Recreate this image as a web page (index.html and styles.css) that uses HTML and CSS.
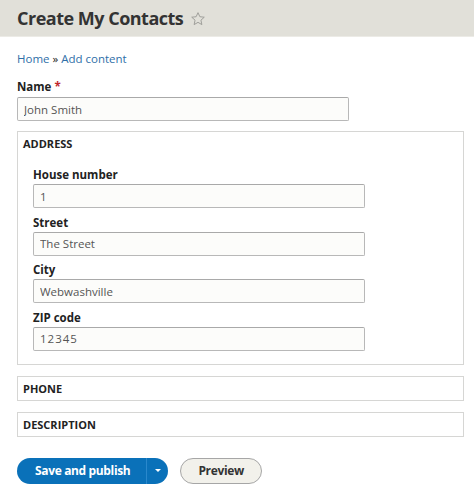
FILE: index.html
```html
<!DOCTYPE html>
<html lang="en">
<head>
    <meta charset="UTF-8">
    <meta name="viewport" content="width=device-width, initial-scale=1.0">
    <title>Create My Contacts</title>
    <link rel="stylesheet" href="styles.css">
</head>
<body>
    <div class="page-header">
        <h1 class="page-title">Create My Contacts</h1>
        <svg class="star" viewBox="0 0 24 24" width="16" height="16"><path d="M12 2.5l2.8 6.1 6.6.7-5 4.5 1.4 6.6L12 17l-5.8 3.4 1.4-6.6-5-4.5 6.6-.7z" fill="none" stroke="#9a9a96" stroke-width="1.4" stroke-linejoin="round"/></svg>
    </div>
    <div class="content">
        <div class="breadcrumb"><a href="#">Home</a> &raquo; <a href="#">Add content</a></div>

        <div class="form-item">
            <label>Name <span class="required">*</span></label>
            <input type="text" class="form-text wide" value="John Smith">
        </div>

        <div class="fieldset">
            <div class="legend">Address</div>
            <div class="fieldset-body">
                <div class="form-item">
                    <label>House number</label>
                    <input type="text" class="form-text" value="1">
                </div>
                <div class="form-item">
                    <label>Street</label>
                    <input type="text" class="form-text" value="The Street">
                </div>
                <div class="form-item">
                    <label>City</label>
                    <input type="text" class="form-text" value="Webwashville">
                </div>
                <div class="form-item">
                    <label>ZIP code</label>
                    <input type="text" class="form-text zip" value="12345">
                </div>
            </div>
        </div>

        <div class="fieldset collapsed"><div class="legend">Phone</div></div>
        <div class="fieldset collapsed"><div class="legend">Description</div></div>

        <div class="actions">
            <div class="split-button">
                <button class="button-primary">Save and publish</button>
                <button class="button-toggle"><span class="caret"></span></button>
            </div>
            <button class="button">Preview</button>
        </div>
    </div>
</body>
</html>
```

FILE: styles.css
```css
:root {
    --link-color: #2f6fa8;
    --text-color: #222;
    --border-color: #d6d6d4;
    --input-border: #b8b8b8;
    --primary-color: #0a71b9;
}
body, html { margin: 0; padding: 0; font-family: 'Open Sans', 'DejaVu Sans', sans-serif; background: #fff; color: var(--text-color); }
.page-header { background: #e1e0d9; height: 37px; border-bottom: 1px solid #ecebe6; box-sizing: border-box; padding: 0 17px; display: flex; align-items: center; }
.page-title { margin: 0; font-size: 18px; font-weight: bold; color: #333; letter-spacing: -0.5px; }
.star { margin-left: 7px; margin-top: 1px; }
.content { padding: 0 10px 0 17px; }
.breadcrumb { font-size: 11.5px; margin-top: 15px; line-height: 14px; }
.breadcrumb a { color: var(--link-color); text-decoration: none; }
.form-item { margin-top: 14px; }
.form-item label { display: block; font-size: 11.5px; font-weight: bold; line-height: 14px; margin-bottom: 3px; color: #222; }
.required { color: #c0272d; }
.form-text { display: block; box-sizing: border-box; width: 332px; height: 24px; border: 1px solid var(--input-border); border-top-color: #a9a9a9; border-radius: 2px; background: #fcfcfa; padding: 0 6px; font-family: inherit; font-size: 11.5px; color: #555; }
.zip { letter-spacing: 1px; }
.fieldset { border: 1px solid var(--border-color); margin-top: 10px; }
.legend { font-size: 11px; font-weight: bold; text-transform: uppercase; line-height: 14px; padding: 5px 5px 4px; color: #222; }
.fieldset-body { padding: 0 0 13px 15px; }
.fieldset-body .form-item { margin-top: 7.5px; }
.fieldset-body .form-item label { margin-bottom: 2px; }
.fieldset-body .form-item:first-child { margin-top: 13px; }
.collapsed { margin-top: 11px; }
.actions { display: flex; align-items: center; gap: 12px; margin-top: 21px; }
.split-button { display: flex; background: var(--primary-color); border-radius: 13px; height: 26px; }
.split-button button { background: none; border: none; color: #fff; font-family: inherit; font-weight: bold; font-size: 12px; letter-spacing: -0.35px; cursor: pointer; }
.button-primary { padding: 0 16px 0 18px; border-right: 1px solid #2a88cc !important; }
.button-toggle { width: 21px; padding: 0; display: flex; align-items: center; justify-content: center; }
.caret { width: 0; height: 0; border-left: 3px solid transparent; border-right: 3px solid transparent; border-top: 3px solid #fff; }
.button { height: 26px; padding: 0 17px; border: 1px solid #a6a6a6; border-radius: 13px; background: #f2f1eb; font-family: inherit; font-weight: bold; font-size: 12px; letter-spacing: -0.35px; color: #333; cursor: pointer; }
```
